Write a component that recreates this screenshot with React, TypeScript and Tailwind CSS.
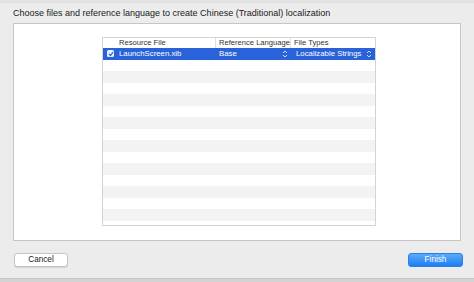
import React from "react";

const rows = 15;

function Arrows() {
  return (
    <svg width="6" height="8" viewBox="0 0 6 8" className="shrink-0">
      <path d="M1 3 L3 1 L5 3" fill="none" stroke="#c9dcfb" strokeWidth="1" />
      <path d="M1 5 L3 7 L5 5" fill="none" stroke="#c9dcfb" strokeWidth="1" />
    </svg>
  );
}

export default function App() {
  return (
    <div
      className="w-[474px] h-[282px] bg-[#ececec] flex flex-col overflow-hidden text-[#222]"
      style={{ fontFamily: '"Liberation Sans", Arial, sans-serif' }}
    >
      <div className="h-[3px] bg-[#e2e2e2] shrink-0" />
      <div className="px-[13px] pt-[5px] text-[9px] leading-[11px] text-[#1a1a1a]">
        Choose files and reference language to create Chinese (Traditional) localization
      </div>
      <div className="mx-[13px] mt-[4px] h-[218px] bg-white border border-[#c6c6c6] flex pl-[88px] pt-[13px]">
        <div className="w-[274px] h-[189px] border border-[#d4d4d4] flex flex-col overflow-hidden">
          <div className="h-[10px] flex items-center text-[7.6px] text-[#333] shrink-0">
            <div className="w-[15px]" />
            <div className="w-[98px] pl-[1px] h-full flex items-center border-r border-[#e0e0e0]">
              Resource File
            </div>
            <div className="w-[75px] pl-[3px] h-full flex items-center border-r border-[#e0e0e0]">
              Reference Language
            </div>
            <div className="pl-[3px]">File Types</div>
          </div>
          <div className="h-[11.5px] bg-[#2a62d9] flex items-center text-[7.8px] text-white shrink-0">
            <div className="w-[15px] flex justify-center">
              <div className="w-[7px] h-[7px] rounded-[1.5px] bg-[#e9effc] flex items-center justify-center">
                <svg width="6" height="6" viewBox="0 0 6 6">
                  <path d="M1 3 L2.5 4.6 L5 1.2" fill="none" stroke="#2a62d9" strokeWidth="1.2" />
                </svg>
              </div>
            </div>
            <div className="w-[98px] pl-[1px]">LaunchScreen.xib</div>
            <div className="w-[75px] pl-[3px] flex items-center justify-between pr-[3px]">
              <span>Base</span>
              <Arrows />
            </div>
            <div className="flex-1 pl-[5px] flex items-center justify-between pr-[3px]">
              <span>Localizable Strings</span>
              <Arrows />
            </div>
          </div>
          {Array.from({ length: rows }).map((_, i) => (
            <div
              key={i}
              className={`h-[11.5px] shrink-0 ${i % 2 === 1 ? "bg-[#f3f3f3]" : "bg-white"}`}
            />
          ))}
        </div>
      </div>
      <div className="flex justify-between pl-[14px] pr-[11px] mt-[12px]">
        <button className="w-[54px] h-[14px] bg-white border border-[#c4c4c4] rounded-[3px] text-[8.2px] leading-none text-[#222] shadow-[0_0.5px_0_#bcbcbc]">
          Cancel
        </button>
        <button className="w-[55px] h-[14px] rounded-[3px] text-[8.2px] leading-none text-white bg-gradient-to-b from-[#5aaafa] to-[#1a7df2] border border-[#2a7fe8]">
          Finish
        </button>
      </div>
      <div className="mt-auto h-[4px] bg-[#d3d3d3] border-t border-[#c4c4c4] shrink-0" />
    </div>
  );
}
